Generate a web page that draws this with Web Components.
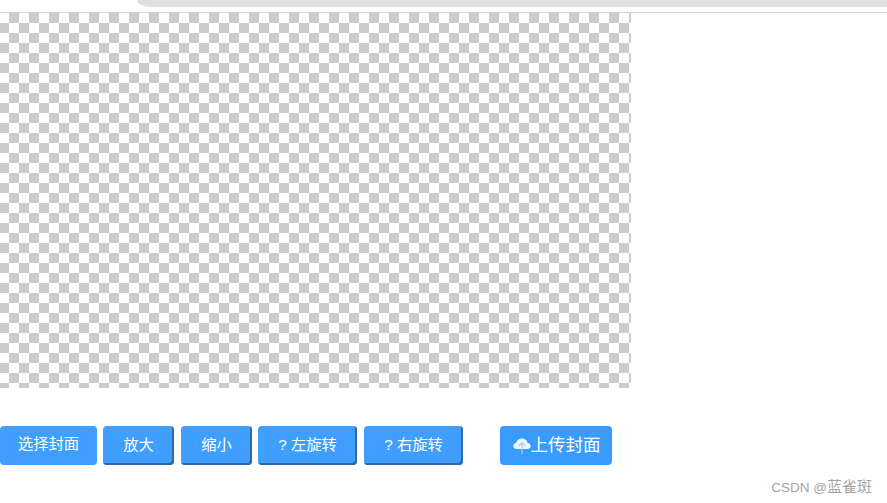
<!DOCTYPE html>
<html lang="zh">
<head>
<meta charset="utf-8">
<title>封面</title>
<style>
  html, body { margin: 0; padding: 0; background: #fff; height: 503px; overflow: hidden; }
  body { font-family: "Liberation Sans", "Noto Sans CJK SC", sans-serif; }
</style>
</head>
<body>
<top-strip></top-strip>
<cover-canvas></cover-canvas>
<tool-bar>
  <tool-button plain lift style="width:97px;margin-right:6px">选择封面</tool-button>
  <tool-button style="width:71px;margin-right:7px">放大</tool-button>
  <tool-button style="width:71px;margin-right:6px">缩小</tool-button>
  <tool-button style="width:99px;margin-right:7px">? 左旋转</tool-button>
  <tool-button style="width:99px;margin-right:37px">? 右旋转</tool-button>
  <tool-button plain big style="width:112px">
    <svg slot="icon" width="18" height="17" viewBox="0 0 18 17"><path fill="#f0f6ff" d="M3.800 11C1.700 11 .3 9.700.3 8c0-1.600 1.200-2.800 2.800-3C3.700 2.500 6 .6 8.800.6c2.800 0 5.200 1.800 5.800 4.400 1.800.2 3.100 1.400 3.100 3 0 1.700-1.500 3-3.500 3z"/><path fill="none" stroke="#a9cdf8" stroke-width="1.200" d="M9 16.500V4.800M5.800 8 9 4.800 12.200 8"/></svg>
    上传封面
  </tool-button>
</tool-bar>
<water-mark></water-mark>
<script>
class TopStrip extends HTMLElement {
  constructor() {
    super();
    this.attachShadow({ mode: 'open' });
    this.shadowRoot.innerHTML = `
      <style>
        :host { display: flex; justify-content: flex-end; height: 12px; border-bottom: 1px solid #d2d2d2; }
        .tab { width: 750px; height: 7px; background: #dfdfdf; border-bottom-left-radius: 14px 7px; }
      </style>
      <div class="tab"></div>`;
  }
}
customElements.define('top-strip', TopStrip);

class CoverCanvas extends HTMLElement {
  constructor() {
    super();
    this.attachShadow({ mode: 'open' });
    this.shadowRoot.innerHTML = `
      <style>
        :host {
          display: block;
          width: 631px;
          height: 375px;
          background-color: #fff;
          background-image: conic-gradient(#ccc 25%, #fff 0 50%, #ccc 0 75%, #fff 0);
          background-size: 20px 20px;
          background-position: -1px 0;
        }
      </style>`;
  }
}
customElements.define('cover-canvas', CoverCanvas);

class ToolBar extends HTMLElement {
  constructor() {
    super();
    this.attachShadow({ mode: 'open' });
    this.shadowRoot.innerHTML = `
      <style>
        :host { display: flex; align-items: flex-start; margin-top: 38px; height: 39px; }
      </style>
      <slot></slot>`;
  }
}
customElements.define('tool-bar', ToolBar);

class ToolButton extends HTMLElement {
  constructor() {
    super();
    this.attachShadow({ mode: 'open' });
    this.shadowRoot.innerHTML = `
      <style>
        :host {
          display: flex;
          align-items: center;
          justify-content: center;
          box-sizing: border-box;
          height: 39px;
          padding-bottom: 5px;
          border-radius: 4px;
          background: #409eff;
          color: #fff;
          font-size: 15.300px;
          box-shadow: inset -2px -2px 0 #2a6ba8;
          white-space: nowrap;
        }
        :host([plain]) { box-shadow: none; }
        :host([lift]) { padding-bottom: 8px; }
        :host([big]) { font-size: 17.500px; background: #3a9bff; padding-left: 1px; }
        ::slotted(svg) { flex: none; margin-top: 6px; }
      </style>
      <slot name="icon"></slot><slot></slot>`;
  }
}
customElements.define('tool-button', ToolButton);

class WaterMark extends HTMLElement {
  constructor() {
    super();
    this.attachShadow({ mode: 'open' });
    this.shadowRoot.innerHTML = `
      <style>
        :host {
          position: absolute;
          right: 15px;
          top: 478px;
          font-size: 15px;
          line-height: 18px;
          color: #a3a3a3;
          white-space: nowrap;
        }
        span { font-size: 13.500px; }
      </style>
      <span>CSDN @</span>蓝雀斑`;
  }
}
customElements.define('water-mark', WaterMark);
</script>
</body>
</html>
